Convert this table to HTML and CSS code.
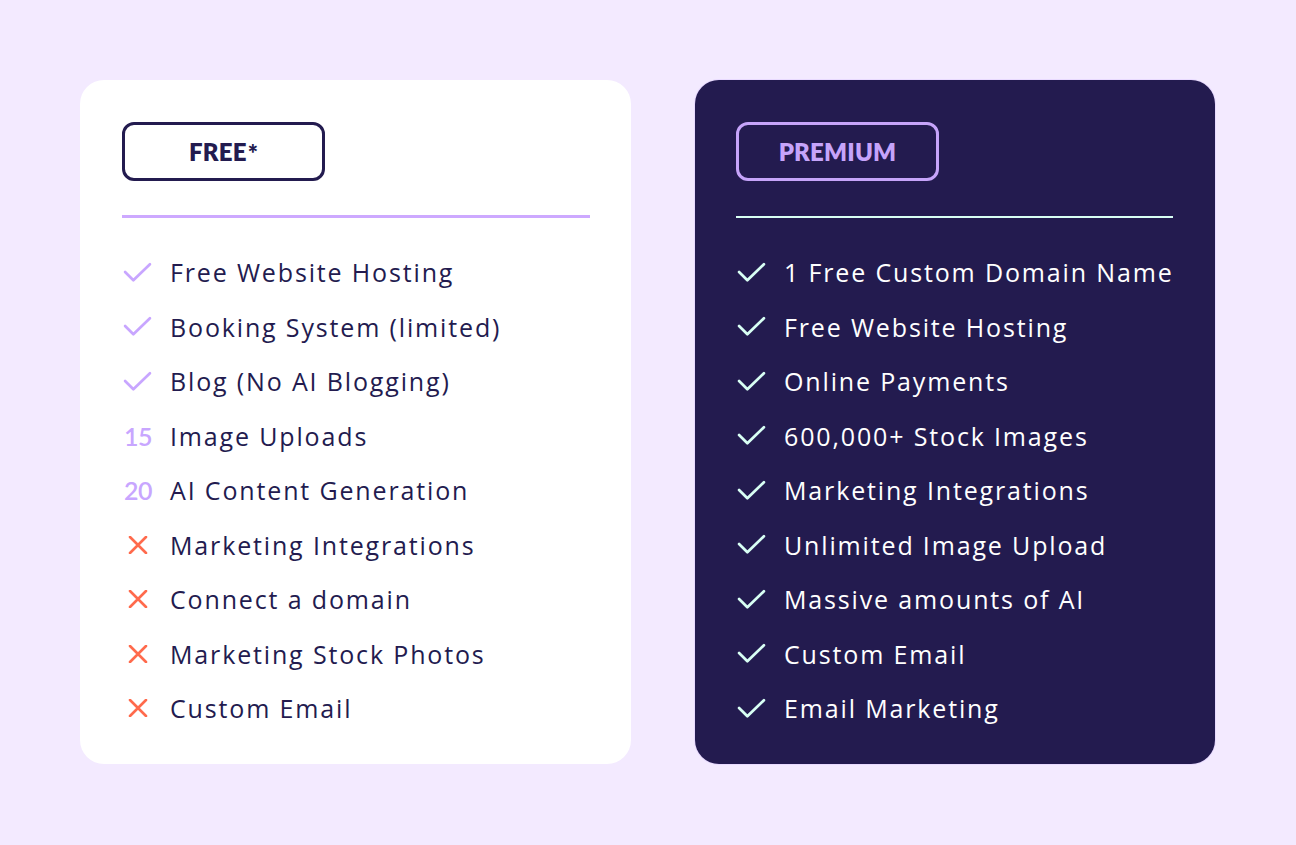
FILE: index.html
```html
<!DOCTYPE html>
<html lang="en">
<head>
<meta charset="utf-8">
<title>Plans</title>
<link rel="stylesheet" href="styles.css">
</head>
<body>
<main class="plans">
  <section class="card card-free">
    <div class="badge badge-free">FREE<sup>*</sup></div>
    <hr class="rule rule-free">
    <ul class="features">
      <li><span class="ico"><svg class="check check-free" viewBox="0 0 28 20"><path d="M2 9.5 L10 17.5 L26 2"/></svg></span>Free Website Hosting</li>
      <li><span class="ico"><svg class="check check-free" viewBox="0 0 28 20"><path d="M2 9.5 L10 17.5 L26 2"/></svg></span>Booking System (limited)</li>
      <li><span class="ico"><svg class="check check-free" viewBox="0 0 28 20"><path d="M2 9.5 L10 17.5 L26 2"/></svg></span>Blog (No AI Blogging)</li>
      <li><span class="ico num">15</span>Image Uploads</li>
      <li><span class="ico num">20</span>AI Content Generation</li>
      <li><span class="ico"><svg class="cross" viewBox="0 0 20 18"><path d="M2 1 L18 17 M18 1 L2 17"/></svg></span>Marketing Integrations</li>
      <li><span class="ico"><svg class="cross" viewBox="0 0 20 18"><path d="M2 1 L18 17 M18 1 L2 17"/></svg></span>Connect a domain</li>
      <li><span class="ico"><svg class="cross" viewBox="0 0 20 18"><path d="M2 1 L18 17 M18 1 L2 17"/></svg></span>Marketing Stock Photos</li>
      <li><span class="ico"><svg class="cross" viewBox="0 0 20 18"><path d="M2 1 L18 17 M18 1 L2 17"/></svg></span>Custom Email</li>
    </ul>
  </section>
  <section class="card card-premium">
    <div class="badge badge-premium">PREMIUM</div>
    <hr class="rule rule-premium">
    <ul class="features">
      <li><span class="ico"><svg class="check check-mint" viewBox="0 0 28 20"><path d="M2 9.5 L10 17.5 L26 2"/></svg></span>1 Free Custom Domain Name</li>
      <li><span class="ico"><svg class="check check-mint" viewBox="0 0 28 20"><path d="M2 9.5 L10 17.5 L26 2"/></svg></span>Free Website Hosting</li>
      <li><span class="ico"><svg class="check check-mint" viewBox="0 0 28 20"><path d="M2 9.5 L10 17.5 L26 2"/></svg></span>Online Payments</li>
      <li><span class="ico"><svg class="check check-mint" viewBox="0 0 28 20"><path d="M2 9.5 L10 17.5 L26 2"/></svg></span>600,000+ Stock Images</li>
      <li><span class="ico"><svg class="check check-mint" viewBox="0 0 28 20"><path d="M2 9.5 L10 17.5 L26 2"/></svg></span>Marketing Integrations</li>
      <li><span class="ico"><svg class="check check-mint" viewBox="0 0 28 20"><path d="M2 9.5 L10 17.5 L26 2"/></svg></span>Unlimited Image Upload</li>
      <li><span class="ico"><svg class="check check-mint" viewBox="0 0 28 20"><path d="M2 9.5 L10 17.5 L26 2"/></svg></span>Massive amounts of AI</li>
      <li><span class="ico"><svg class="check check-mint" viewBox="0 0 28 20"><path d="M2 9.5 L10 17.5 L26 2"/></svg></span>Custom Email</li>
      <li><span class="ico"><svg class="check check-mint" viewBox="0 0 28 20"><path d="M2 9.5 L10 17.5 L26 2"/></svg></span>Email Marketing</li>
    </ul>
  </section>
</main>
</body>
</html>
```

FILE: styles.css
```css
* { box-sizing: border-box; }
html, body { margin: 0; padding: 0; }
body {
  background: #f3eaff;
  font-family: "Open Sans", Lato, sans-serif;
  color: #231b4f;
  width: 1296px;
  height: 845px;
  overflow: hidden;
}
.plans {
  display: flex;
  gap: 64px;
  padding: 80px 0 0 80px;
}
.card {
  height: 684px;
  border-radius: 24px;
  padding: 42px 0 0 42px;
}
.card-free {
  width: 551px;
  background: #ffffff;
}
.card-premium {
  width: 520px;
  background: #231b4f;
  color: #ffffff;
  padding-left: 41px;
  box-shadow: 0 0 0 1px rgba(200,170,255,0.25);
}
.badge {
  width: 203px;
  height: 59px;
  border-radius: 12px;
  border: 3px solid #231b4f;
  display: flex;
  align-items: center;
  justify-content: center;
  font-family: Lato, sans-serif;
  font-weight: 800;
  font-size: 24px;
  letter-spacing: 0.2px;
}
.badge sup {
  font-size: 24px;
  line-height: 0;
  position: relative;
  top: 1px;
  margin-left: 1px;
}
.badge-premium {
  border-color: #c6a4fa;
  color: #c6a4fa;
}
.rule {
  border: 0;
  height: 3px;
  margin: 34px 0 0 0;
}
.rule-free { width: 468px; background: #cda9ff; }
.rule-premium { width: 437px; background: #d8fff4; height: 2px; margin-top: 35px; }
.features {
  list-style: none;
  margin: 27px 0 0 0;
  padding: 0;
}
.features li {
  display: flex;
  align-items: center;
  height: 54.5px;
  font-size: 25px;
  letter-spacing: 1.85px;
}
.ico {
  width: 48px;
  flex: none;
  display: flex;
  align-items: center;
}
.check {
  width: 29px;
  height: 21px;
  fill: none;
  stroke-width: 2.6;
  stroke-linecap: round;
  stroke-linejoin: round;
}
.check-free { stroke: #c8a6ff; margin-left: 1px; }
.check-mint { stroke: #d8fff4; margin-left: 1px; }
.cross {
  width: 20px;
  height: 18px;
  fill: none;
  stroke: #ff6a4c;
  stroke-width: 2.6;
  stroke-linecap: round;
  margin-left: 6px;
}
.num {
  color: #c8a6ff;
  font-family: Lato, sans-serif;
  font-weight: 600;
  font-size: 25px;
  letter-spacing: -0.5px;
  padding-left: 2px;
}
```
